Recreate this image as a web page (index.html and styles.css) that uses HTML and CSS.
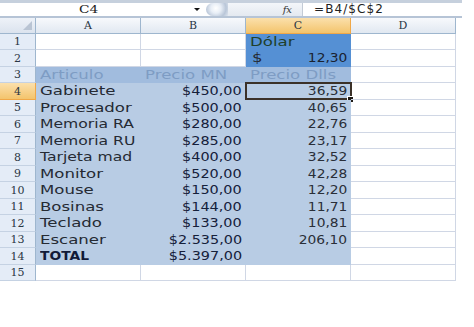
FILE: index.html
```html
<!DOCTYPE html>
<html lang="es">
<head>
<meta charset="utf-8">
<title>Hoja</title>
<link rel="stylesheet" href="styles.css">
</head>
<body>
<div class="app">
  <div class="fbar">
    <div class="namebox"><span class="nm">C4</span><span class="dd"></span></div>
    <div class="knob"></div>
    <div class="fxzone"><span class="fx">fx</span></div>
    <div class="formula">=B4/$C$2</div>
  </div>
  <div class="sheet">
    <div class="corner"><span class="tri"></span></div>
    <div class="ch">A</div><div class="ch">B</div><div class="ch selh">C</div><div class="ch">D</div>

    <div class="rh">1</div><div class="c"></div><div class="c"></div><div class="c fc"><span class="t tg">Dólar</span></div><div class="c"></div>
    <div class="rh">2</div><div class="c"></div><div class="c"></div><div class="c fc acc"><span class="t">$</span><span class="n nk">12,30</span></div><div class="c"></div>
    <div class="rh">3</div><div class="c f3"><span class="t th">Articulo</span></div><div class="c f3"><span class="t th">Precio MN</span></div><div class="c f3"><span class="t th">Precio Dlls</span></div><div class="c"></div>
    <div class="rh selh">4</div><div class="c f"><span class="t">Gabinete</span></div><div class="c f r"><span class="m">$450,00</span></div><div class="c f r cur"><span class="n">36,59</span><span class="box"></span><span class="handle"></span></div><div class="c"></div>
    <div class="rh">5</div><div class="c f"><span class="t">Procesador</span></div><div class="c f r"><span class="m">$500,00</span></div><div class="c f r"><span class="n">40,65</span></div><div class="c"></div>
    <div class="rh">6</div><div class="c f"><span class="t tn">Memoria RA</span></div><div class="c f r"><span class="m">$280,00</span></div><div class="c f r"><span class="n">22,76</span></div><div class="c"></div>
    <div class="rh">7</div><div class="c f"><span class="t tn">Memoria RU</span></div><div class="c f r"><span class="m">$285,00</span></div><div class="c f r"><span class="n">23,17</span></div><div class="c"></div>
    <div class="rh">8</div><div class="c f"><span class="t tn">Tarjeta mad</span></div><div class="c f r"><span class="m">$400,00</span></div><div class="c f r"><span class="n">32,52</span></div><div class="c"></div>
    <div class="rh">9</div><div class="c f"><span class="t">Monitor</span></div><div class="c f r"><span class="m">$520,00</span></div><div class="c f r"><span class="n">42,28</span></div><div class="c"></div>
    <div class="rh">10</div><div class="c f"><span class="t">Mouse</span></div><div class="c f r"><span class="m">$150,00</span></div><div class="c f r"><span class="n">12,20</span></div><div class="c"></div>
    <div class="rh">11</div><div class="c f"><span class="t">Bosinas</span></div><div class="c f r"><span class="m">$144,00</span></div><div class="c f r"><span class="n">11,71</span></div><div class="c"></div>
    <div class="rh">12</div><div class="c f"><span class="t">Teclado</span></div><div class="c f r"><span class="m">$133,00</span></div><div class="c f r"><span class="n">10,81</span></div><div class="c"></div>
    <div class="rh">13</div><div class="c f"><span class="t">Escaner</span></div><div class="c f r"><span class="m">$2.535,00</span></div><div class="c f r"><span class="n">206,10</span></div><div class="c"></div>
    <div class="rh">14</div><div class="c f"><span class="t tb">TOTAL</span></div><div class="c f r"><span class="m">$5.397,00</span></div><div class="c f"></div><div class="c"></div>
    <div class="rh">15</div><div class="c"></div><div class="c"></div><div class="c"></div><div class="c"></div>
  </div>
</div>
</body>
</html>
```
FILE: styles.css
```css
html, body { margin: 0; padding: 0; background: #ffffff; }
.app { width: 474px; height: 327px; overflow: hidden; font-family: "DejaVu Sans", sans-serif; }

.fbar {
  height: 18px;
  box-sizing: border-box;
  border-top: 3px solid #c6d0dd;
  border-bottom: 2px solid #b6c4d6;
  display: flex;
  width: 462px;
  background: #ffffff;
}
.namebox {
  width: 206px;
  position: relative;
  display: flex;
  align-items: center;
  justify-content: center;
  background: #fff;
}
.nm { font-family: "DejaVu Serif", serif; font-size: 11px; color: #222; margin-left: -28px; display: inline-block; transform: scaleX(1.25); }
.dd {
  position: absolute; right: 6px; top: 5px;
  width: 0; height: 0;
  border-left: 3px solid transparent; border-right: 3px solid transparent; border-top: 3px solid #111;
}
.knob {
  width: 22px;
  background: radial-gradient(circle at 45% 40%, #ffffff 0, #e8eef6 35%, #b9c6d8 70%, #dfe6ef 100%);
  border-radius: 8px 0 0 8px;
}
.fxzone {
  width: 75px;
  background: linear-gradient(#f3f6fa, #e4e9f0);
  display: flex; align-items: center; justify-content: flex-end;
  padding-right: 10px;
  box-sizing: border-box;
  border-right: 1px solid #c3cbd6;
}
.fx { font-family: "DejaVu Serif", serif; font-style: italic; font-size: 10px; color: #333; }
.formula {
  flex: 1;
  padding-left: 11px;
  font-size: 12px; letter-spacing: 1.1px;
  color: #222;
  line-height: 13px;
}

.sheet {
  display: grid;
  grid-template-columns: 36px 105px 105px 105px 105px;
  grid-template-rows: 16px 16px 17px 16px 17px 16px 17px 16px 17px 16px 17px 16px 17px 16px 17px 16px;
  width: 456px;
}
.corner, .ch, .rh {
  box-sizing: border-box;
  border-right: 1px solid #9eb6ce;
  border-bottom: 1px solid #9eb6ce;
  font-family: "DejaVu Serif", serif;
  font-size: 11px;
  color: #2a3644;
  display: flex; align-items: center; justify-content: center;
}
.corner { background: linear-gradient(#eef2f8, #dbe3ee); position: relative; }
.tri {
  position: absolute; right: 3px; bottom: 3px;
  width: 0; height: 0;
  border-left: 9px solid transparent; border-bottom: 9px solid #b9c4d3;
}
.ch { background: linear-gradient(#f7f9fc, #e1e8f1); }
.rh { background: #e4ecf7; border-bottom-color: #c5d2e3; }
.ch.selh, .rh.selh { background: linear-gradient(#fbe0ac, #f3c46c); border-color: #f0a848; }

.c {
  box-sizing: border-box;
  border-right: 1px solid #d0d7e5;
  border-bottom: 1px solid #d0d7e5;
  display: flex; align-items: center;
  padding: 0 3px 0 4px;
  overflow: hidden;
  white-space: nowrap;
  font-size: 12px;
  color: #252a33;
  position: relative;
}
.c.f { background: #b8cce4; border-color: #b8cce4; }
.c.f3 { background: #a1bcde; border-color: #a1bcde; }
.c.fc { background: #5590d4; border-color: #5590d4; }
.c.r { justify-content: flex-end; }
.c.cur { overflow: visible; }

.t { display: inline-block; transform: scaleX(1.38); transform-origin: left center; }
.t.tn { transform: scaleX(1.3); }
.th { color: #7e9cc4; }
.tg { color: #1f3f2b; }
.tb { font-weight: bold; color: #111a38; transform: scaleX(1.15); }
.m { display: inline-block; transform: scaleX(1.2); transform-origin: right center; color: #15203a; }
.n { display: inline-block; transform: scaleX(1.15); transform-origin: right center; color: #2a2f38; }
.acc { justify-content: space-between; padding-left: 6px; }
.nk { color: #1a2230; }

.box {
  position: absolute; left: -1px; top: -1px; right: -2px; bottom: -1px;
  border: 2px solid #3b3128;
  pointer-events: none;
}
.handle {
  position: absolute; right: -4px; bottom: -4px;
  width: 5px; height: 5px;
  background: #1e1a16;
  border: 1px solid #fff;
}
```
